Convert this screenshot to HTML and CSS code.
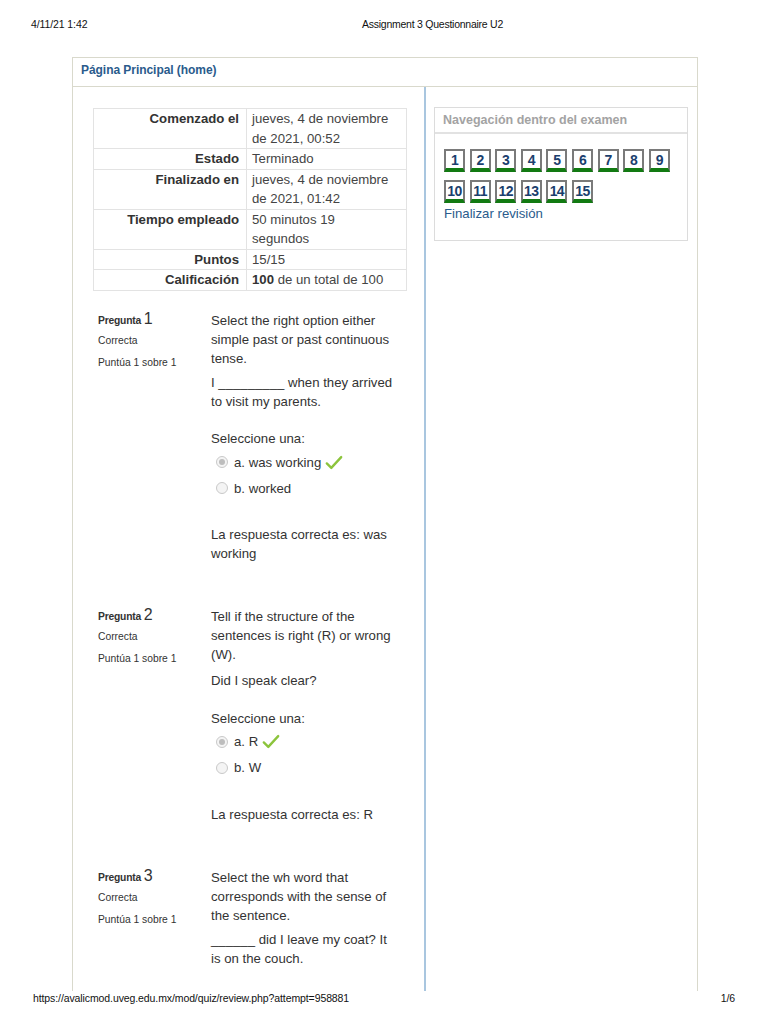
FILE: index.html
```html
<!DOCTYPE html>
<html lang="es">
<head>
<meta charset="utf-8">
<title>Assignment 3 Questionnaire U2</title>
<link rel="stylesheet" href="styles.css">
</head>
<body>
<div class="page">
  <div class="print-head">
    <span class="ph-date">4/11/21 1:42</span>
    <span class="ph-title">Assignment 3 Questionnaire U2</span>
  </div>

  <div class="frame">
    <div class="frame-head">Página Principal (home)</div>
    <div class="frame-body">
      <div class="main-col">
        <table class="summary">
          <tr><th>Comenzado el</th><td>jueves, 4 de noviembre de 2021, 00:52</td></tr>
          <tr><th>Estado</th><td>Terminado</td></tr>
          <tr><th>Finalizado en</th><td>jueves, 4 de noviembre de 2021, 01:42</td></tr>
          <tr><th>Tiempo empleado</th><td>50 minutos 19 segundos</td></tr>
          <tr><th>Puntos</th><td>15/15</td></tr>
          <tr><th>Calificación</th><td><b>100</b> de un total de 100</td></tr>
        </table>

        <div class="question">
          <div class="q-info">
            <div class="q-no">Pregunta <span class="num">1</span></div>
            <div class="q-state">Correcta</div>
            <div class="q-grade">Puntúa 1 sobre 1</div>
          </div>
          <div class="q-content">
            <p class="q-text">Select the right option either simple past or past continuous tense.</p>
            <p class="q-text">I _________ when they arrived to visit my parents.</p>
            <div class="prompt">Seleccione una:</div>
            <div class="opt"><span class="radio checked"></span><span>a. was working</span><svg class="tick" viewBox="0 0 20 16" width="18" height="15"><path d="M2 9 L7 14 L18 2" fill="none" stroke="#8cc43c" stroke-width="2.6" stroke-linecap="round" stroke-linejoin="round"/></svg></div>
            <div class="opt"><span class="radio"></span><span>b. worked</span></div>
            <div class="answer">La respuesta correcta es: was working</div>
          </div>
        </div>

        <div class="question">
          <div class="q-info">
            <div class="q-no">Pregunta <span class="num">2</span></div>
            <div class="q-state">Correcta</div>
            <div class="q-grade">Puntúa 1 sobre 1</div>
          </div>
          <div class="q-content">
            <p class="q-text">Tell if the structure of the sentences is right (R) or wrong (W).</p>
            <p class="q-text q-gap">Did I speak clear?</p>
            <div class="prompt">Seleccione una:</div>
            <div class="opt"><span class="radio checked"></span><span>a. R</span><svg class="tick" viewBox="0 0 20 16" width="18" height="15"><path d="M2 9 L7 14 L18 2" fill="none" stroke="#8cc43c" stroke-width="2.6" stroke-linecap="round" stroke-linejoin="round"/></svg></div>
            <div class="opt"><span class="radio"></span><span>b. W</span></div>
            <div class="answer">La respuesta correcta es: R</div>
          </div>
        </div>

        <div class="question">
          <div class="q-info">
            <div class="q-no">Pregunta <span class="num">3</span></div>
            <div class="q-state">Correcta</div>
            <div class="q-grade">Puntúa 1 sobre 1</div>
          </div>
          <div class="q-content">
            <p class="q-text">Select the wh word that corresponds with the sense of the sentence.</p>
            <p class="q-text">______ did I leave my coat? It is on the couch.</p>
          </div>
        </div>
      </div>

      <div class="side-col">
        <div class="nav-block">
          <div class="nav-head">Navegación dentro del examen</div>
          <div class="nav-body">
            <div class="nav-row">
              <span class="qbtn">1</span><span class="qbtn">2</span><span class="qbtn">3</span><span class="qbtn">4</span><span class="qbtn">5</span><span class="qbtn">6</span><span class="qbtn">7</span><span class="qbtn">8</span><span class="qbtn">9</span>
            </div>
            <div class="nav-row">
              <span class="qbtn">10</span><span class="qbtn">11</span><span class="qbtn">12</span><span class="qbtn">13</span><span class="qbtn">14</span><span class="qbtn">15</span>
            </div>
            <a class="finish" href="#">Finalizar revisión</a>
          </div>
        </div>
      </div>
    </div>
  </div>

  <div class="print-foot">
    <span>https://avalicmod.uveg.edu.mx/mod/quiz/review.php?attempt=958881</span>
    <span>1/6</span>
  </div>
</div>
</body>
</html>
```

FILE: styles.css
```css
* { box-sizing: border-box; }
html, body { margin: 0; padding: 0; background: #fff; }
body {
  font-family: "Liberation Sans", Arial, sans-serif;
  color: #333;
}
.page {
  width: 768px;
  height: 1024px;
  overflow: hidden;
  display: flex;
  flex-direction: column;
}

.print-head {
  flex: none;
  height: 57px;
  padding: 18px 0 0 31px;
  font-size: 10.5px;
  color: #111;
  display: flex;
}
.ph-date { width: 331px; letter-spacing: -0.1px; }
.ph-title { letter-spacing: -0.25px; }

.frame {
  flex: none;
  margin-left: 72px;
  width: 626px;
  height: 934px;
  border: 1px solid #d9d9cc;
  border-bottom: none;
  display: flex;
  flex-direction: column;
}
.frame-head {
  flex: none;
  height: 29px;
  border-bottom: 1px solid #d9d9cc;
  padding: 5px 0 0 8px;
  font-size: 12px;
  font-weight: bold;
  letter-spacing: -0.05px;
  color: #2a5b8c;
}
.frame-body {
  flex: 1;
  min-height: 0;
  display: flex;
}
.main-col {
  flex: none;
  width: 353px;
  border-right: 2px solid #a9c6df;
  padding: 21px 0 0 20px;
}
.side-col {
  flex: 1;
  padding: 20px 0 0 8px;
}

.summary {
  width: 314px;
  border-collapse: collapse;
  font-size: 13.2px;
  line-height: 19.5px;
  border: 1px solid #e3e3e3;
}
.summary th, .summary td {
  border: 1px solid #e3e3e3;
  vertical-align: top;
  padding: 0 14px 0 5px;
}
.summary th {
  width: 153px;
  text-align: right;
  font-weight: bold;
  color: #333;
  padding: 0 7px 0 4px;
}
.summary td { color: #444; }
.summary td b { color: #333; }

.question {
  display: flex;
  margin-top: 20px;
  margin-bottom: 44px;
}
.q-info {
  flex: none;
  width: 118px;
  margin-top: -3px;
  padding-left: 5px;
  font-size: 10.3px;
  color: #333;
}
.q-no { font-weight: bold; height: 22px; line-height: 22px; letter-spacing: -0.2px; }
.q-no .num { font-weight: normal; font-size: 16px; letter-spacing: 0; }
.q-state { height: 22px; line-height: 22px; }
.q-grade { height: 22px; line-height: 22px; }

.q-content {
  width: 188px;
  font-size: 13.2px;
  line-height: 19px;
  color: #333;
}
.q-text { margin: 0 0 5px 0; }
.q-gap { margin-top: 7px; }
.prompt { margin-top: 18.5px; height: 20px; }
.opt {
  display: flex;
  align-items: center;
  height: 26px;
  padding-left: 5px;
  gap: 6px;
}
.radio {
  width: 12px;
  height: 12px;
  border-radius: 50%;
  border: 1px solid #c9c9c9;
  background: #f4f4f4;
  position: relative;
  flex: none;
}
.radio.checked::after {
  content: "";
  position: absolute;
  left: 2px; top: 2px;
  width: 6px; height: 6px;
  border-radius: 50%;
  background: #bdbdbd;
}
.tick { margin-left: -2px; }
.answer { margin-top: 24px; }

.nav-block {
  width: 254px;
  height: 134px;
  border: 1px solid #dcdcdc;
}
.nav-head {
  height: 26px;
  border-bottom: 2px solid #e2e2e2;
  padding: 5px 0 0 8px;
  font-size: 12.5px;
  font-weight: bold;
  color: #a3a3a3;
}
.nav-body { padding: 15px 0 0 9px; }
.nav-row {
  display: flex;
  gap: 4.6px;
  margin-bottom: 8px;
}
.qbtn {
  width: 21px;
  height: 23px;
  border: 2px solid #7a7a7a;
  border-bottom: 4px solid #127a12;
  background: #fff;
  font-size: 14px;
  font-weight: bold;
  letter-spacing: -0.6px;
  color: #1b3f6e;
  display: flex;
  align-items: center;
  justify-content: center;
  line-height: 1;
}
.finish {
  display: block;
  margin-top: -5px;
  font-size: 13.2px;
  color: #2a5b8c;
  text-decoration: none;
}

.print-foot {
  flex: none;
  display: flex;
  justify-content: space-between;
  padding: 1px 33px 0 33px;
  height: 33px;
  font-size: 10.5px;
  letter-spacing: -0.1px;
  color: #111;
}
```
